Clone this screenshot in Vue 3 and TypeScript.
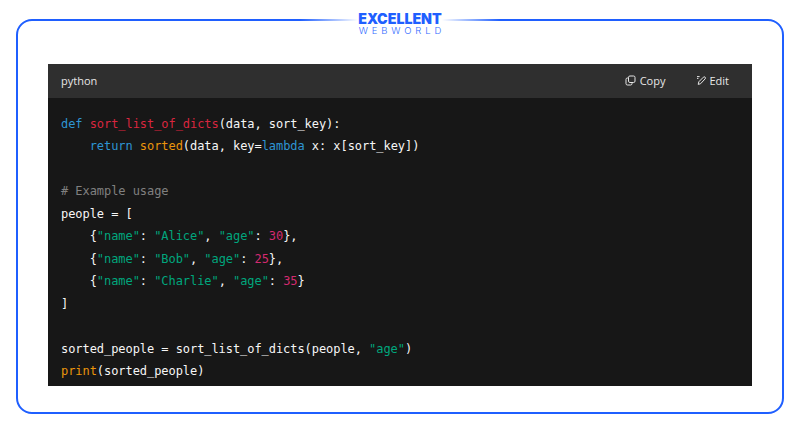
<script setup lang="ts">
type Tok = { t: string; c?: string }
const lines: Tok[][] = [
  [{ t: 'def', c: 'kw' }, { t: ' ' }, { t: 'sort_list_of_dicts', c: 'fn' }, { t: '(data, sort_key):' }],
  [{ t: '    ' }, { t: 'return', c: 'kw' }, { t: ' ' }, { t: 'sorted', c: 'bi' }, { t: '(data, key=' }, { t: 'lambda', c: 'kw' }, { t: ' x: x[sort_key])' }],
  [],
  [{ t: '# Example usage', c: 'cm' }],
  [{ t: 'people = [' }],
  [{ t: '    {' }, { t: '"name"', c: 'st' }, { t: ': ' }, { t: '"Alice"', c: 'st' }, { t: ', ' }, { t: '"age"', c: 'st' }, { t: ': ' }, { t: '30', c: 'nu' }, { t: '},' }],
  [{ t: '    {' }, { t: '"name"', c: 'st' }, { t: ': ' }, { t: '"Bob"', c: 'st' }, { t: ', ' }, { t: '"age"', c: 'st' }, { t: ': ' }, { t: '25', c: 'nu' }, { t: '},' }],
  [{ t: '    {' }, { t: '"name"', c: 'st' }, { t: ': ' }, { t: '"Charlie"', c: 'st' }, { t: ', ' }, { t: '"age"', c: 'st' }, { t: ': ' }, { t: '35', c: 'nu' }, { t: '}' }],
  [{ t: ']' }],
  [],
  [{ t: 'sorted_people = sort_list_of_dicts(people, ' }, { t: '"age"', c: 'st' }, { t: ')' }],
  [{ t: 'print', c: 'bi' }, { t: '(sorted_people)' }],
]
</script>

<template>
  <div class="page">
    <div class="logo">
      <span class="rule left"></span>
      <div class="mark">
        <div class="brand">EXCELLENT</div>
        <div class="sub">WEBWORLD</div>
      </div>
      <span class="rule right"></span>
    </div>
    <div class="frame">
      <div class="code">
        <div class="head">
          <span class="lang">python</span>
          <div class="actions">
            <span class="act">
              <svg width="11" height="11" viewBox="0 0 11 11" fill="none" stroke="#e6e6e6" stroke-width="1">
                <rect x="3.5" y="1" width="6.5" height="6.5" rx="1.4" />
                <path d="M3.5 3H2.4A1.4 1.4 0 0 0 1 4.4v4.2A1.4 1.4 0 0 0 2.4 10h3.2A1.4 1.4 0 0 0 7 8.6V7.5" />
              </svg>
              Copy
            </span>
            <span class="act edit">
              <svg width="11" height="11" viewBox="0 0 11 11" fill="none" stroke="#e6e6e6" stroke-width="1">
                <path d="M2.2 9.4 2.8 6.8 7.4 2.2a1.2 1.2 0 0 1 1.7 1.7L4.6 8.7Z" />
                <path d="M1 1.6h2.6M1 3.4h1.4" />
              </svg>
              Edit
            </span>
          </div>
        </div>
        <pre class="body"><code><span v-for="(line, i) in lines" :key="i" class="line"><span v-for="(tok, j) in line" :key="j" :class="tok.c">{{ tok.t }}</span></span></code></pre>
      </div>
    </div>
  </div>
</template>

<style>
html, body { margin: 0; background: #fff; }
</style>

<style scoped>
.page {
  position: relative;
  width: 800px;
  height: 430px;
  padding: 19px 16px 0;
  box-sizing: border-box;
  overflow: hidden;
  background: #fff;
}
.frame {
  height: 395px;
  box-sizing: border-box;
  border: 2px solid #1f5fff;
  border-radius: 16px;
  padding: 43px 30px 0;
}
.logo {
  position: absolute;
  top: 11px;
  left: 300px;
  width: 200px;
  height: 24px;
  display: flex;
  align-items: flex-start;
  background: #fff;
}
.mark {
  width: 84px;
  flex: none;
  margin: 0 -1px;
  padding: 0 1px;
  box-sizing: content-box;
  text-align: center;
  font-family: "Inter", "Liberation Sans", sans-serif;
}
.rule {
  flex: 1;
  height: 2px;
  margin-top: 8px;
}
.rule.left { background: linear-gradient(to right, #1f5fff, #ffffff); }
.rule.right { background: linear-gradient(to left, #1f5fff, #ffffff); }
.brand {
  font-size: 14.2px;
  font-weight: 900;
  line-height: 12px;
  margin-top: 1.5px;
  color: #1f5fff;
  white-space: nowrap;
}
.sub {
  font-size: 9.5px;
  font-weight: 300;
  line-height: 9px;
  margin-top: 1px;
  color: #2f6bff;
  letter-spacing: 3.85px;
  margin-right: -3.85px;
  white-space: nowrap;
}
.code {
  height: 322px;
  background: #171717;
  overflow: hidden;
}
.head {
  height: 34px;
  background: #2f2f2f;
  display: flex;
  align-items: center;
  justify-content: space-between;
  padding: 0 23px 2px 13px;
  box-sizing: border-box;
  color: #e6e6e6;
  font-family: "Open Sans", "Liberation Sans", sans-serif;
  font-size: 11px;
}
.actions {
  display: flex;
  gap: 31px;
}
.act {
  display: inline-flex;
  align-items: center;
  gap: 4px;
}
.act.edit {
  gap: 2px;
}
.body {
  margin: 0;
  padding: 14.5px 13px 0;
  font-family: "DejaVu Sans Mono", "Liberation Mono", monospace;
  font-size: 12px;
  letter-spacing: -0.06px;
  line-height: 22.5px;
  color: #f6f6f6;
}
.line {
  display: block;
  height: 22.5px;
}
.kw { color: #2e95d3; }
.fn { color: #d9263f; }
.bi { color: #e9950c; }
.st { color: #00a67d; }
.nu { color: #d42a70; }
.cm { color: #808080; }
</style>
